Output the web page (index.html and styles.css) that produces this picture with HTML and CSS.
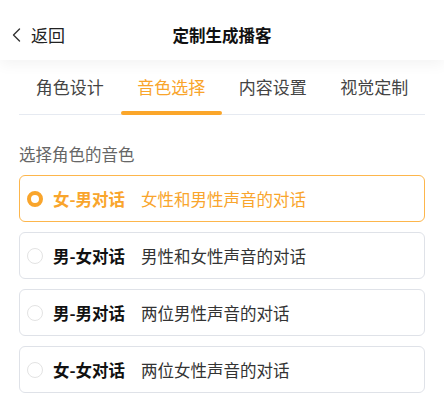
FILE: index.html
```html
<!DOCTYPE html>
<html lang="zh">
<head>
<meta charset="utf-8">
<link rel="stylesheet" href="styles.css">
</head>
<body>
<header class="header">
  <div class="back">
    <svg class="chev" width="9" height="16" viewBox="0 0 9 16"><polyline points="7.5,2 1.5,8 7.5,14" fill="none" stroke="#333" stroke-width="1.4" stroke-linecap="round" stroke-linejoin="round"/></svg>
    <span>返回</span>
  </div>
  <div class="title">定制生成播客</div>
  <div></div>
</header>
<nav class="tabs">
  <div class="tab">角色设计</div>
  <div class="tab active">音色选择</div>
  <div class="tab">内容设置</div>
  <div class="tab">视觉定制</div>
</nav>
<main class="content">
  <div class="label">选择角色的音色</div>
  <div class="options">
    <div class="option selected"><span class="radio"></span><span class="name">女-男对话</span><span class="desc">女性和男性声音的对话</span></div>
    <div class="option"><span class="radio"></span><span class="name">男-女对话</span><span class="desc">男性和女性声音的对话</span></div>
    <div class="option"><span class="radio"></span><span class="name">男-男对话</span><span class="desc">两位男性声音的对话</span></div>
    <div class="option"><span class="radio"></span><span class="name">女-女对话</span><span class="desc">两位女性声音的对话</span></div>
  </div>
</main>
</body>
</html>
```
FILE: styles.css
```css
* { box-sizing: border-box; }
body {
  margin: 0;
  background: #fff;
  font-family: "Noto Sans CJK SC", "Noto Sans", sans-serif;
  color: #222;
}
.header {
  position: relative;
  z-index: 2;
  height: 60px;
  padding-top: 10px;
  display: grid;
  grid-template-columns: 1fr auto 1fr;
  align-items: center;
  background: #fff;
  box-shadow: 0 4px 14px rgba(0, 0, 0, 0.05);
}
.back {
  display: flex;
  align-items: center;
  gap: 10px;
  padding-left: 12px;
  font-size: 17px;
  line-height: 22px;
  color: #222;
}
.chev { display: block; }
.title {
  font-size: 16.5px;
  font-weight: 700;
  line-height: 22px;
  color: #111;
}
.tabs {
  margin: 0 19px;
  display: grid;
  grid-template-columns: repeat(4, 1fr);
  border-bottom: 1px solid #e6eaf1;
}
.tab {
  position: relative;
  height: 54px;
  padding-top: 16px;
  text-align: center;
  font-size: 17px;
  line-height: 22px;
  color: #444;
}
.tab.active { color: #f9a52c; }
.tab.active::after {
  content: "";
  position: absolute;
  left: 0;
  right: 0;
  bottom: -1px;
  height: 4px;
  border-radius: 2px;
  background: #fba62a;
}
.content { padding: 0 19px; }
.label {
  margin-top: 28px;
  font-size: 16.5px;
  line-height: 22px;
  color: #666;
}
.options {
  margin-top: 10px;
  display: flex;
  flex-direction: column;
  gap: 10px;
}
.option {
  height: 47px;
  display: flex;
  align-items: center;
  padding-left: 7px;
  border: 1px solid #dfe2e8;
  border-radius: 6px;
  background: #fff;
  font-size: 16.5px;
  line-height: 22px;
}
.radio {
  width: 16px;
  height: 16px;
  border-radius: 50%;
  border: 1px solid #e3e3e3;
  margin-right: 10px;
  flex: none;
}
.name {
  font-weight: 700;
  color: #111;
  margin-right: 16px;
}
.desc { color: #333; }
.option.selected { border-color: #fdb64c; }
.option.selected .radio { border: 4px solid #f9a52c; }
.option.selected .name,
.option.selected .desc { color: #f9a52c; }
```
